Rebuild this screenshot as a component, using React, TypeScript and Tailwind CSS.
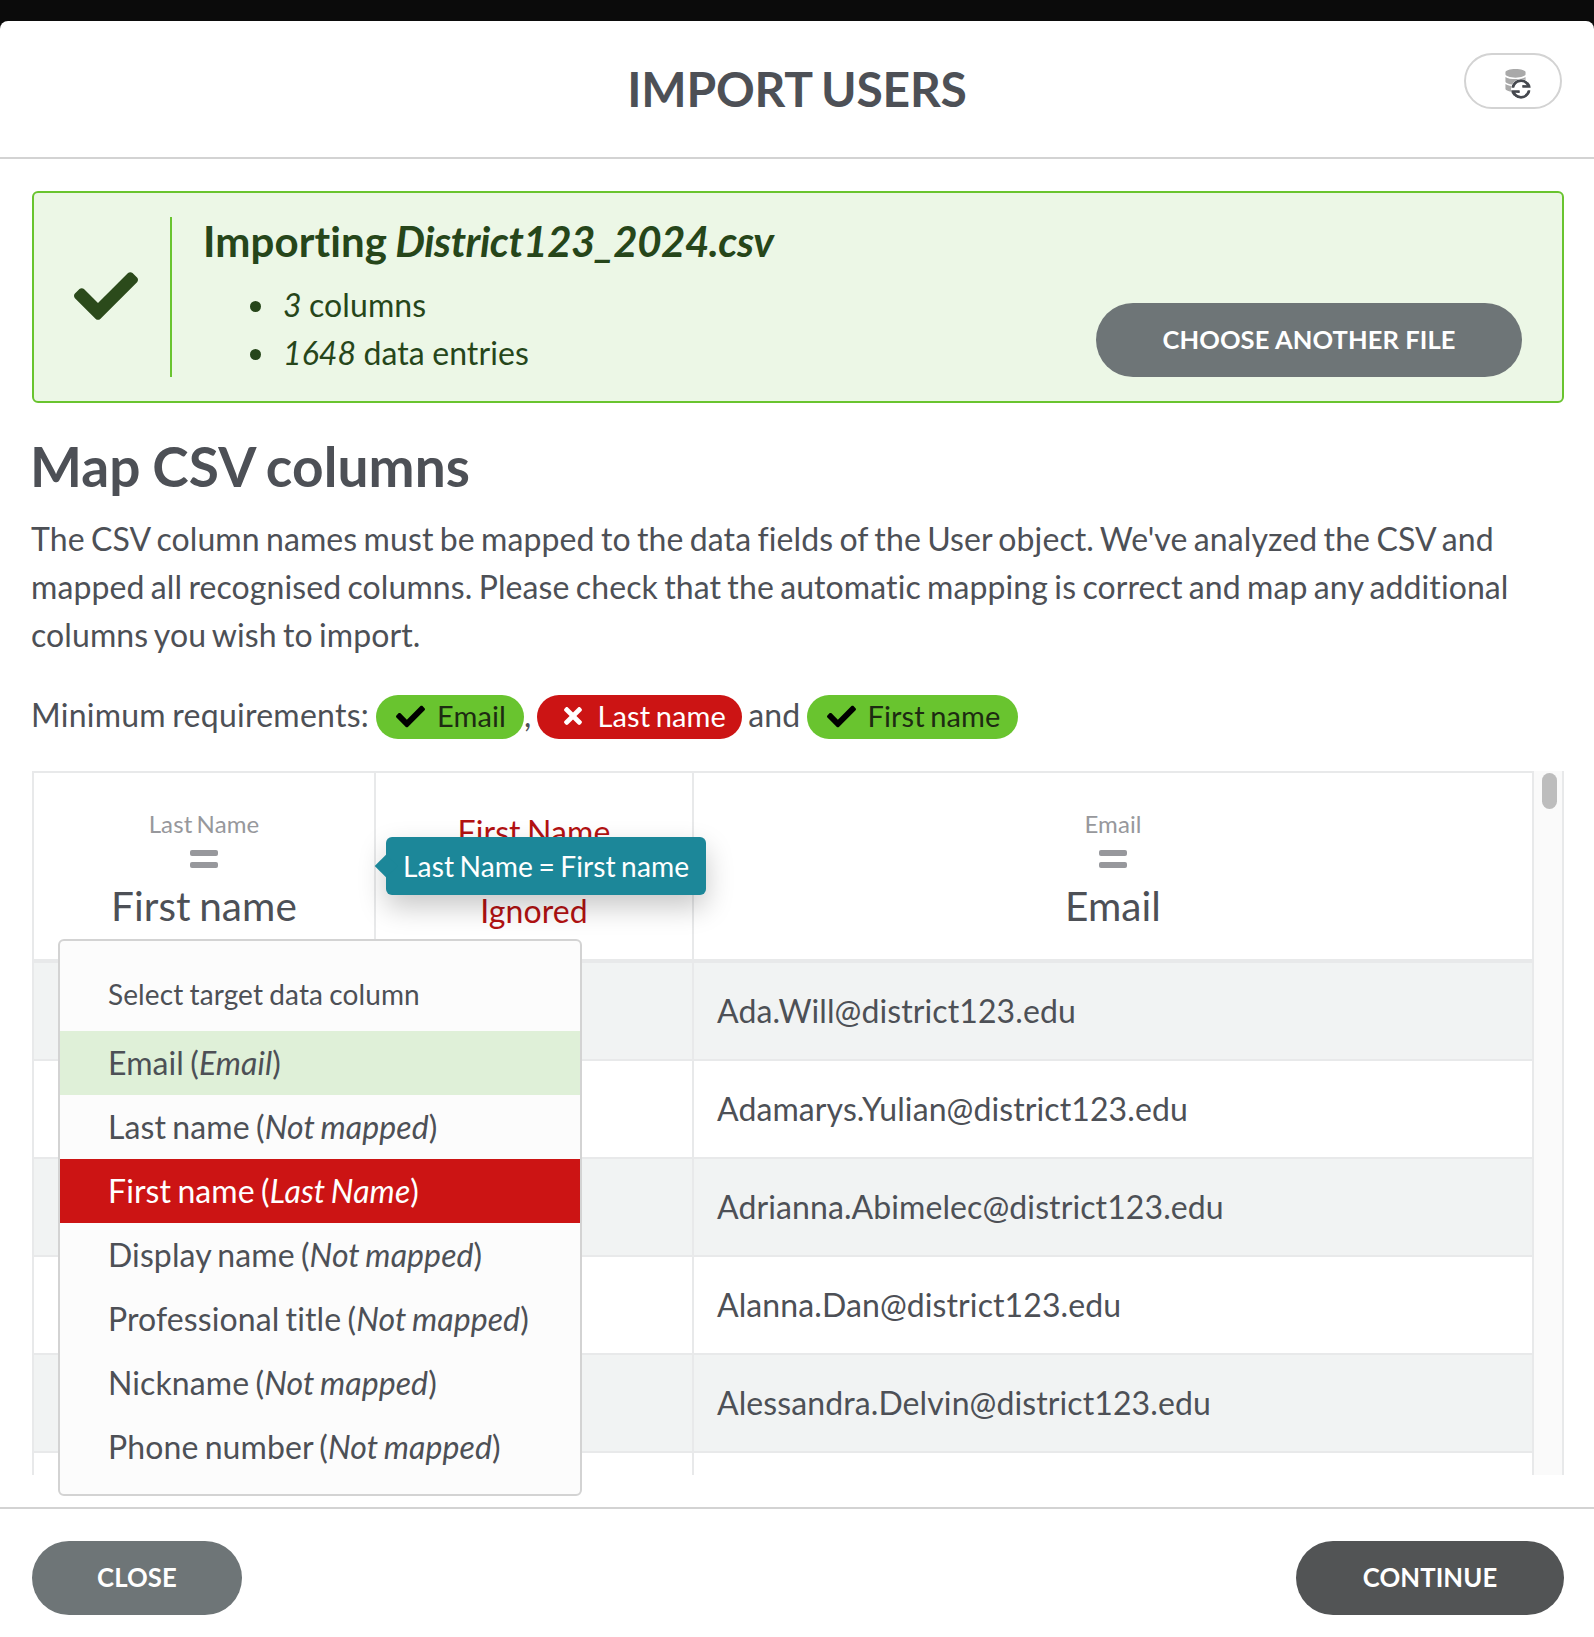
import { FaCheck, FaDatabase, FaSync, FaTimes } from 'react-icons/fa';

const emails = [
  'Ada.Will@district123.edu',
  'Adamarys.Yulian@district123.edu',
  'Adrianna.Abimelec@district123.edu',
  'Alanna.Dan@district123.edu',
  'Alessandra.Delvin@district123.edu',
  '',
];

const targets = [
  { name: 'Email', mapped: 'Email', className: 'bg-[#dff0d8]' },
  { name: 'Last name', mapped: 'Not mapped', className: '' },
  { name: 'First name', mapped: 'Last Name', className: 'bg-[#cc1414] text-white' },
  { name: 'Display name', mapped: 'Not mapped', className: '' },
  { name: 'Professional title', mapped: 'Not mapped', className: '' },
  { name: 'Nickname', mapped: 'Not mapped', className: '' },
  { name: 'Phone number', mapped: 'Not mapped', className: '' },
];

const Pill = ({ ok, label }: { ok: boolean; label: string }) => (
  <span
    className={`mt-[4px] inline-flex h-11 items-center rounded-full pb-[2px] text-[29px] ${
      ok ? 'bg-[#69c42f] pl-5 pr-[18px] text-[#1d2b12]' : 'bg-[#cc1414] pl-[23px] pr-[16px] text-white'
    }`}
  >
    {ok ? <FaCheck className="mr-[12px] text-[29px] text-black" /> : <FaTimes className="mr-[12px] text-[26px]" />}
    {label}
  </span>
);

const ColumnHead = ({ from, to }: { from: string; to: string }) => (
  <div className="flex h-full flex-col items-center pt-[36px] text-[#4d5056]">
    <div className="text-[24px] leading-[30px] text-[#97989c]">{from}</div>
    <div className="mt-[11px] flex w-[28px] flex-col gap-[6px]">
      <div className="h-[6px] rounded-[2px] bg-[#97989c]"></div>
      <div className="h-[6px] rounded-[2px] bg-[#97989c]"></div>
    </div>
    <div className="mt-[10px] text-[40.5px] leading-[56px]">{to}</div>
  </div>
);

export default function App() {
  return (
    <div className="min-h-[1637px] bg-[#0b0b0b] pt-[21px] font-['Lato',sans-serif] tracking-[0.1px] text-[#4d5056] [word-spacing:-2px]">
      <div className="relative flex h-[1616px] flex-col overflow-hidden rounded-t-[8px] bg-white">
        <header className="relative flex h-[138px] shrink-0 items-center justify-center border-b-2 border-[#d3d3d3]">
          <h1 className="text-[48px] font-bold tracking-[-0.2px]">IMPORT USERS</h1>
          <button className="absolute right-[32px] top-[32px] flex h-[56px] w-[98px] items-center justify-center rounded-full border-2 border-[#d3d3d3] bg-white pl-2 pt-[5px]">
            <span className="relative block h-[30px] w-[27px]">
              <FaDatabase className="absolute left-0 top-0 text-[23px] text-[#a9a9a9]" />
              <FaSync className="absolute bottom-0 right-0 rounded-full bg-white text-[20px] text-[#45484e]" />
            </span>
          </button>
        </header>

        <main className="flex min-h-0 flex-1 flex-col pl-[32px] pr-[30px] pt-[32px]">
          <section className="flex h-[212px] shrink-0 rounded-[6px] border-2 border-[#69c42f] bg-[#ecf7e6] text-[#26461a]">
            <div className="my-[24px] flex w-[138px] items-center justify-center border-r-2 border-[#69c42f] pl-[7px]">
              <FaCheck className="mt-[-2px] text-[64px] text-[#2b4a1b]" />
            </div>
            <div className="flex-1 pl-[31px] pt-[22px]">
              <h2 className="text-[42px] font-bold leading-[52px] tracking-[0.1px]">
                Importing <em className="tracking-[-0.46px]">District123_2024.csv</em>
              </h2>
              <ul className="ml-[75px] mt-[14px] list-disc text-[32px] leading-[48px] [word-spacing:-1px]">
                <li className="pl-[5px]">
                  <em>3</em> columns
                </li>
                <li className="pl-[5px]">
                  <em>1648</em> data entries
                </li>
              </ul>
            </div>
            <div className="flex items-end pb-[24px] pr-[40px]">
              <button className="h-[74px] w-[426px] rounded-full bg-[#6e7577] pb-[2px] text-[25.5px] font-bold text-white">
                CHOOSE ANOTHER FILE
              </button>
            </div>
          </section>

          <h2 className="ml-[-2px] mt-[29px] text-[55px] font-bold leading-[68px]">Map CSV columns</h2>
          <p className="ml-[-1px] mt-[15px] text-[32px] leading-[48px]">
            The CSV column names must be mapped to the data fields of the User object. We've analyzed the CSV and mapped
            all recognised columns. Please check that the automatic mapping is correct and map any additional columns you
            wish to import.
          </p>

          <div className="ml-[-1px] mt-[34px] flex h-[44px] items-center whitespace-pre text-[32px]">
            <span className="mr-[7px] tracking-[0.25px]">Minimum requirements:</span>
            <Pill ok label="Email" />
            <span className="mr-[-1px]">{', '}</span>
            <Pill ok={false} label="Last name" />
            <span> and </span>
            <Pill ok label="First name" />
          </div>

          <div className="relative mt-[34px] flex min-h-0 flex-1">
            <div className="h-[704px] flex-1 overflow-hidden border-l-2 border-t-2 border-[#e8e9ea]">
              <div className="grid h-[190px] grid-cols-[342px_318px_1fr] border-b-4 border-[#e8e9ea]">
                <div className="border-r-2 border-[#e8e9ea]">
                  <ColumnHead from="Last Name" to="First name" />
                </div>
                <div className="flex flex-col items-center border-r-2 border-[#e8e9ea] pt-[37px] text-[32px] leading-[44px] text-[#b31212]">
                  <div>First Name</div>
                  <div className="mt-[35px]">Ignored</div>
                </div>
                <ColumnHead from="Email" to="Email" />
              </div>
              {emails.map((email, i) => (
                <div
                  key={i}
                  className={`grid h-[98px] grid-cols-[342px_318px_1fr] border-b-2 border-[#e8e9ea] ${
                    i % 2 === 0 ? 'bg-[#f1f3f3]' : 'bg-white'
                  }`}
                >
                  <div className="border-r-2 border-[#e8e9ea]"></div>
                  <div className="border-r-2 border-[#e8e9ea]"></div>
                  <div className="flex items-center pl-[23px] text-[32px]">{email}</div>
                </div>
              ))}
            </div>
            <div className="h-[704px] w-[32px] shrink-0 border-x-2 border-[#e8e9ea] bg-[#fafafa] pl-[8px] pt-[2px]">
              <div className="h-[36px] w-[15px] rounded-full bg-[#bdbdbd]"></div>
            </div>

            {/* tooltip */}
            <div className="absolute left-[354px] top-[66px] rounded-[6px] bg-[#1c8799] px-[17px] text-[28.2px] leading-[58px] text-white shadow-[0_12px_28px_rgba(0,0,0,0.22)]">
              <span className="absolute left-[-8px] top-[21px] h-[16px] w-[16px] rotate-45 bg-[#1c8799]"></span>
              <span className="relative">Last Name = First name</span>
            </div>

            {/* column picker */}
            <div className="absolute left-[26px] top-[168px] w-[524px] rounded-[6px] border-2 border-[#d3d3d3] bg-[#fcfcfc] pb-[15px]">
              <div className="flex h-[90px] items-center px-[48px] pt-[15px] text-[28px] [word-spacing:-1px]">
                Select target data column
              </div>
              {targets.map((t) => (
                <div key={t.name} className={`flex h-[64px] items-center whitespace-pre px-[48px] text-[32px] ${t.className}`}>
                  {t.name} (<em>{t.mapped}</em>)
                </div>
              ))}
            </div>
          </div>
        </main>

        <footer className="flex h-[130px] shrink-0 items-start justify-between border-t-2 border-[#d3d3d3] pl-[32px] pr-[30px] pt-[32px]">
          <button className="h-[74px] w-[210px] rounded-full bg-[#6e7577] pb-[2px] text-[25.7px] font-bold text-white">
            CLOSE
          </button>
          <button className="h-[74px] w-[268px] rounded-full bg-[#525455] pb-[2px] text-[25.7px] font-bold text-white">
            CONTINUE
          </button>
        </footer>
      </div>
    </div>
  );
}
